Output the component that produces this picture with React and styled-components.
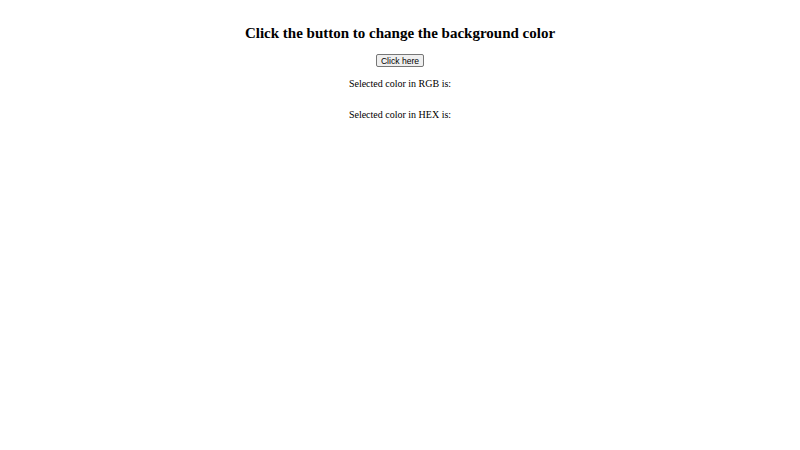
import React, { useState } from 'react';
import styled, { createGlobalStyle } from 'styled-components';

const GlobalStyle = createGlobalStyle`
  body {
    margin: 0;
    font-family: "Liberation Serif", "Times New Roman", serif;
    background: ${({ bg }) => bg};
  }
`;

const Wrapper = styled.div`
  text-align: center;
  padding-top: 25px;
`;

const Title = styled.h2`
  font-size: 15px;
  line-height: 17px;
  font-weight: bold;
  margin: 0 0 12px;
`;

const Button = styled.button`
  font-family: "Liberation Sans", Arial, sans-serif;
  font-size: 8.6px;
  line-height: 10px;
  height: 13px;
  padding: 0 4px;
  margin: 0;
  border: 1px solid #767676;
  border-radius: 2px;
  background: #efefef;
  color: #000;
  vertical-align: top;
`;

const Line = styled.p`
  margin: ${({ gap }) => gap}px 0 0;
  font-size: 10px;
  line-height: 12px;
`;

export default function App() {
  const [rgb, setRgb] = useState('');
  const [hex, setHex] = useState('');
  const [bg, setBg] = useState('#ffffff');

  const pick = () => {
    const c = [0, 0, 0].map(() => Math.floor(Math.random() * 256));
    const h = '#' + c.map((v) => v.toString(16).padStart(2, '0')).join('');
    setRgb(`rgb(${c.join(', ')})`);
    setHex(h);
    setBg(h);
  };

  return (
    <Wrapper>
      <GlobalStyle bg={bg} />
      <Title>Click the button to change the background color</Title>
      <Button onClick={pick}>Click here</Button>
      <Line gap={6}>Selected color in RGB is: {rgb}</Line>
      <Line gap={19}>Selected color in HEX is: {hex}</Line>
    </Wrapper>
  );
}
